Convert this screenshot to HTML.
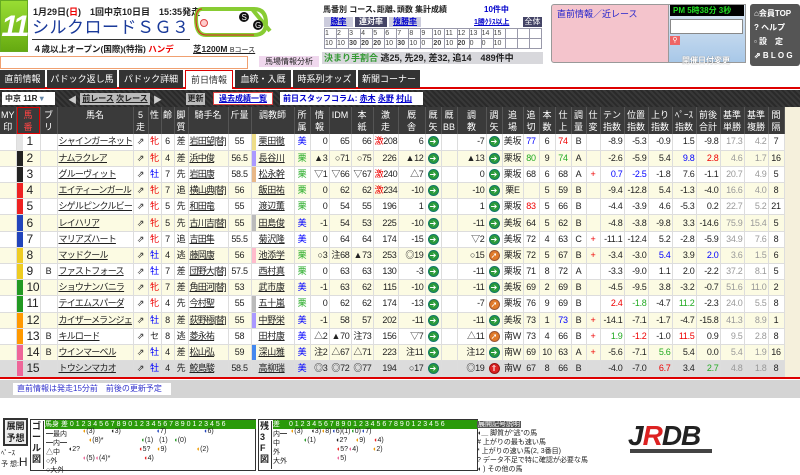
<!DOCTYPE html>
<html><head><meta charset="utf-8">
<style>
*{margin:0;padding:0;box-sizing:border-box}
body{width:800px;height:469px;overflow:hidden;background:#fff;font-family:"Liberation Sans","Noto Sans CJK JP",sans-serif;font-size:9px;color:#222;position:relative}
.a{position:absolute;white-space:nowrap}
.u{text-decoration:underline}
table.m{position:absolute;left:0;top:107px;border-collapse:collapse;table-layout:fixed;width:784px}
table.m th{background:#3a3a3a;color:#fff;font-weight:normal;font-size:9px;line-height:12px;height:27px;border-right:1px solid #555;text-align:center;padding:0;overflow:hidden;white-space:nowrap}
table.m td{height:16.2px;font-size:9px;line-height:15px;border-right:1px solid #ddd;border-bottom:1px solid #ddd;text-align:center;padding:0 1px;white-space:nowrap;overflow:hidden;letter-spacing:-0.3px}
table.m tr:nth-child(odd) td{background:#fcfbe3}
table.m tr.g td{background:#dcdcdc}
td.r{text-align:right!important}
td.n{font-size:12px!important;text-align:left!important;padding-left:10px!important}
td.nm{text-align:left!important;text-decoration:underline;letter-spacing:-0.8px!important}
td.tr{text-align:left!important;text-decoration:underline;padding-left:7px!important}
.f{color:#e00}.b{color:#00f}.gr{color:#2a2}.gy{color:#999}
.ar{display:inline-block;width:11px;height:11px;border-radius:50%;background:#2a9a3a;color:#fff;font-size:8px;line-height:10px;vertical-align:middle;border:1px solid #176;letter-spacing:0}
.ao{background:#e07a2a;border-color:#953}
.ax{background:#d22;border-color:#911}
.beige{position:absolute;left:784px;top:107px;width:16px;height:270px;background:#f5f0dc}
.tab{position:absolute;top:0;height:18px;background:#333;text-align:center}
</style></head><body>

<!-- header -->
<div class="a" style="left:0;top:0;width:28px;height:52px;background:linear-gradient(#9d3,#6a1);color:#fff;font-size:30px;font-style:italic;font-weight:bold;text-align:center;line-height:52px;border:1px solid #6a2;letter-spacing:-3px">11</div>
<div class="a" style="left:33px;top:5px;font-size:9px;font-weight:bold">1月29日(<span class="f">日</span>)　1回中京10日目　15:35発走</div>
<div class="a" style="left:32px;top:17px;font-size:17px;color:#1a3a9a;line-height:22px;border-bottom:1px solid #333;width:158px;letter-spacing:0.5px">シルクロードＳＧ３</div>
<div class="a" style="left:33px;top:43px;font-size:8.5px;font-weight:bold">４歳以上オープン(国際)(特指) <span class="f">ハンデ</span></div>
<svg class="a" style="left:192px;top:3px" width="80" height="36"><path d="M10 6 Q4 6 4 16 Q4 32 14 32 L62 32 Q74 32 74 20 Q74 6 62 6 Z" fill="none" stroke="#8c3" stroke-width="4"/><path d="M60 6 L78 28" stroke="#8c3" stroke-width="4"/><path d="M10 6 Q4 6 4 16 Q4 32 14 32 L62 32" fill="none" stroke="#d22" stroke-width="1"/><circle cx="12" cy="20" r="3.5" fill="#fcc" stroke="#d44"/><circle cx="52" cy="14" r="5" fill="#111"/><text x="49.5" y="17" fill="#fff" font-size="8">S</text><circle cx="66" cy="22" r="5" fill="#111"/><text x="63" y="25" fill="#fff" font-size="8">G</text></svg>
<div class="a u" style="left:193px;top:43px;font-size:8.5px;font-weight:bold">芝1200M <span style="font-size:7px;font-weight:normal">Bコース</span></div>
<div class="a" style="left:0;top:56px;width:248px;height:13px;border:1px solid #f0a070;background:#fff"></div>
<div class="a" style="left:259px;top:56px;width:60px;height:11px;background:#f0d8ee;font-size:8px;text-align:center;line-height:11px">馬場情報分析</div>

<div class="a" style="left:323px;top:4px;font-size:8px;font-weight:bold">馬番別 コース､距離､頭数 集計成績</div>
<div class="a" style="left:484px;top:4px;font-size:8px;font-weight:bold;color:#00c">10件中</div>
<div class="a u" style="left:324px;top:17px;width:29px;height:10px;background:#ccd;color:#00c;font-size:8px;text-align:center;line-height:10px;font-weight:bold">勝率</div>
<div class="a" style="left:355px;top:17px;width:32px;height:10px;background:#446;color:#fff;font-size:8px;text-align:center;line-height:10px;font-weight:bold">連対率</div>
<div class="a u" style="left:389px;top:17px;width:32px;height:10px;background:#ccd;color:#00c;font-size:8px;text-align:center;line-height:10px;font-weight:bold">複勝率</div>
<div class="a u" style="left:474px;top:17px;color:#00c;font-size:7px;font-weight:bold">1勝ｸﾗｽ以上</div>
<div class="a" style="left:523px;top:17px;width:19px;height:10px;background:#446;color:#fff;font-size:8px;text-align:center;line-height:10px">全体</div>
<table class="a" style="left:324px;top:28px;border-collapse:collapse;font-size:7px;color:#444;table-layout:fixed;width:218px">
<tr><td style="border:1px solid #99a;height:10px">1</td><td style="border:1px solid #99a">2</td><td style="border:1px solid #99a">3</td><td style="border:1px solid #99a">4</td><td style="border:1px solid #99a">5</td><td style="border:1px solid #99a">6</td><td style="border:1px solid #99a">7</td><td style="border:1px solid #99a">8</td><td style="border:1px solid #99a">9</td><td style="border:1px solid #99a">10</td><td style="border:1px solid #99a">11</td><td style="border:1px solid #99a">12</td><td style="border:1px solid #99a">13</td><td style="border:1px solid #99a">14</td><td style="border:1px solid #99a">15</td><td style="border:1px solid #99a"></td><td style="border:1px solid #99a"></td><td style="border:1px solid #99a"></td></tr>
<tr><td style="border:1px solid #99a;height:10px">10</td><td style="border:1px solid #99a">10</td><td style="border:1px solid #99a"><b>30</b></td><td style="border:1px solid #99a"><b>20</b></td><td style="border:1px solid #99a"><b>20</b></td><td style="border:1px solid #99a">10</td><td style="border:1px solid #99a"><b>30</b></td><td style="border:1px solid #99a">10</td><td style="border:1px solid #99a">0</td><td style="border:1px solid #99a"><b>20</b></td><td style="border:1px solid #99a">10</td><td style="border:1px solid #99a"><b>20</b></td><td style="border:1px solid #99a">0</td><td style="border:1px solid #99a">0</td><td style="border:1px solid #99a">10</td><td style="border:1px solid #99a"></td><td style="border:1px solid #99a"></td><td style="border:1px solid #99a"></td></tr></table>
<div class="a" style="left:322px;top:52px;width:221px;height:12px;background:#d8d8dc;font-size:9px;font-weight:bold;line-height:12px;padding-left:2px"><span style="color:#393">決まり手割合</span> 逃25, 先29, 差32, 追14　489件中</div>

<div class="a" style="left:551px;top:4px;width:118px;height:59px;background:#f4c4cc;border:1px solid #999;border-radius:3px 0 0 3px;color:#22c;font-size:9px;padding:2px 5px">直前情報／近レース</div>
<div class="a" style="left:668px;top:4px;width:78px;height:59px;background:linear-gradient(#dde8f4,#a8c8e8);border:1px solid #999"></div>
<div class="a" style="left:670px;top:5px;width:74px;height:11px;background:#000;color:#2d2;font-size:8px;font-weight:bold;line-height:11px;padding-left:3px">PM 5時38分 3秒</div>
<div class="a" style="left:670px;top:19px;width:73px;height:15px;background:#fff;border:1px solid #888"></div>
<div class="a" style="left:670px;top:36px;width:10px;height:9px;background:#e66;color:#fff;font-size:7px;text-align:center">&#9906;</div>
<div class="a" style="left:682px;top:55px;font-size:8px;color:#fff;font-weight:bold;text-shadow:0 0 1px #555">開催日付変更</div>
<div class="a" style="left:750px;top:4px;width:50px;height:62px;background:#555;border-radius:3px;color:#fff;font-size:8px;font-weight:bold;line-height:14px;padding:3px 4px">⌂会員TOP<br>? ヘルプ<br>▫ 設　定<br>⇗ B L O G</div>

<!-- tabs -->
<div class="a" style="left:0;top:69px;width:800px;height:20px;border-bottom:2px solid #d00"></div>
<div class="a" style="left:0;top:70px;width:800px;height:19px;font-size:9px;color:#fff;line-height:18px">
<span class="tab" style="left:0;width:45px">直前情報</span>
<span class="tab" style="left:47px;width:70px">パドック返し馬</span>
<span class="tab" style="left:119px;width:64px">パドック詳細</span>
<span class="tab" style="left:185px;width:48px;height:19px;background:#fff;color:#333;border:1px solid #d00;border-bottom:none">前日情報</span>
<span class="tab" style="left:235px;width:56px">血統・入厩</span>
<span class="tab" style="left:293px;width:63px">時系列オッズ</span>
<span class="tab" style="left:358px;width:62px">新聞コーナー</span></div>

<!-- toolbar -->
<div class="a" style="left:0;top:90px;width:800px;height:17px;background:repeating-linear-gradient(45deg,#2a2a2a 0 2px,#383838 2px 4px)"></div>
<div class="a" style="left:2px;top:92px;width:53px;height:13px;background:#fff;font-size:8px;font-weight:bold;line-height:13px;padding-left:3px">中京 11R <span style="color:#68a">▾</span></div>
<div class="a" style="left:68px;top:93px;color:#ccc;font-size:9px">◀</div>
<div class="a" style="left:80px;top:93px;width:70px;height:12px;background:#bbb;font-size:8px;font-weight:bold;line-height:12px;text-align:center"><span class="u">前レース</span> <span class="u">次レース</span></div>
<div class="a" style="left:153px;top:93px;color:#ccc;font-size:9px">▶</div>
<div class="a" style="left:186px;top:93px;width:19px;height:12px;background:#bbb;font-size:8px;font-weight:bold;line-height:12px;text-align:center">更新</div>
<div class="a u" style="left:213px;top:92px;width:60px;height:13px;background:#fff;border:1px solid #d44;font-size:8px;font-weight:bold;color:#00c;text-align:center;line-height:11px">過去成績一覧</div>
<div class="a" style="left:280px;top:92px;width:143px;height:13px;background:#fff;font-size:8px;font-weight:bold;color:#00c;line-height:13px;padding-left:3px">前日スタッフコラム: <span class="u">赤木</span> <span class="u">永野</span> <span class="u">村山</span></div>

<div class="beige"></div>
<table class="m">
<colgroup><col style="width:16px"><col style="width:24px"><col style="width:17px"><col style="width:76px"><col style="width:15px"><col style="width:13px"><col style="width:13px"><col style="width:14px"><col style="width:40px"><col style="width:23px"><col style="width:43px"><col style="width:16px"><col style="width:19px"><col style="width:22px"><col style="width:22px"><col style="width:25px"><col style="width:27px"><col style="width:16px"><col style="width:16px"><col style="width:29px"><col style="width:16px"><col style="width:21px"><col style="width:16px"><col style="width:16px"><col style="width:16px"><col style="width:15px"><col style="width:14px"><col style="width:24px"><col style="width:24px"><col style="width:24px"><col style="width:24px"><col style="width:24px"><col style="width:24px"><col style="width:24px"><col style="width:16px"></colgroup>
<tr><th>MY<br>印</th><th style="color:#f44;box-shadow:inset 0 0 0 1px #d00">馬<br>番</th><th>ブ<br>リ</th><th>馬名<br>&nbsp;</th><th>5<br>走</th><th>性<br>&nbsp;</th><th>齢<br>&nbsp;</th><th>脚<br>質</th><th>騎手名<br>&nbsp;</th><th>斤量<br>&nbsp;</th><th>調教師<br>&nbsp;</th><th>所<br>属</th><th>情<br>報</th><th>IDM<br>&nbsp;</th><th>本<br>紙</th><th>激<br>走</th><th>厩<br>舎</th><th>厩<br>矢</th><th>厩<br>BB</th><th>調<br>教</th><th>調<br>矢</th><th>追<br>場</th><th>追<br>切</th><th>本<br>数</th><th>仕<br>上</th><th>調<br>量</th><th>仕<br>変</th><th>テン<br>指数</th><th>位置<br>指数</th><th>上り<br>指数</th><th>ﾍﾟｰｽ<br>指数</th><th>前後<br>合計</th><th>基準<br>単勝</th><th>基準<br>複勝</th><th>間<br>隔</th></tr>
<tr><td></td><td class="n" style="box-shadow:inset 6px 0 #e4e4e4">1</td><td></td><td class="nm">シャインガーネット</td><td>⇗</td><td class="f">牝</td><td>6</td><td>差</td><td class="nm">岩田望[替]</td><td>55</td><td class="tr" style="box-shadow:inset 4px 0 #eedd88">栗田徹</td><td class="b">美</td><td class="r">0</td><td class="r">65</td><td class="r">66</td><td class="r"><span class="f">激</span>208</td><td class="r">6</td><td><span class="ar">➔</span></td><td></td><td class="r">-7</td><td><span class="ar">➔</span></td><td>美坂</td><td class="b">77</td><td>6</td><td class="f">74</td><td>B</td><td></td><td class="r">-8.9</td><td class="r">-5.3</td><td class="r">-0.9</td><td class="r">1.5</td><td class="r">-9.8</td><td class="r gy">17.3</td><td class="r gy">4.2</td><td>7</td></tr>
<tr><td></td><td class="n" style="box-shadow:inset 6px 0 #222">2</td><td></td><td class="nm">ナムラクレア</td><td>⇗</td><td class="f">牝</td><td>4</td><td>差</td><td class="nm">浜中俊</td><td>56.5</td><td class="tr" style="box-shadow:inset 4px 0 #a9f">長谷川</td><td class="gr">栗</td><td class="r">▲3</td><td class="r">○71</td><td class="r">○75</td><td class="r">226</td><td class="r">▲12</td><td><span class="ar">➔</span></td><td></td><td class="r">▲13</td><td><span class="ar">➔</span></td><td>栗坂</td><td class="gr">80</td><td>9</td><td class="gr">74</td><td>A</td><td></td><td class="r">-2.6</td><td class="r">-5.9</td><td class="r">5.4</td><td class="r b">9.8</td><td class="r f">2.8</td><td class="r gy">4.6</td><td class="r gy">1.7</td><td>16</td></tr>
<tr><td></td><td class="n" style="box-shadow:inset 6px 0 #222">3</td><td></td><td class="nm">グルーヴィット</td><td>⇗</td><td class="b">牡</td><td>7</td><td>先</td><td class="nm">岩田康</td><td>58.5</td><td class="tr" style="box-shadow:inset 4px 0 #e8b888">松永幹</td><td class="gr">栗</td><td class="r">▽1</td><td class="r">▽66</td><td class="r">▽67</td><td class="r"><span class="f">激</span>240</td><td class="r">△7</td><td><span class="ar">➔</span></td><td></td><td class="r">0</td><td><span class="ar">➔</span></td><td>栗坂</td><td>68</td><td>6</td><td>68</td><td>A</td><td class="f">+</td><td class="r b">0.7</td><td class="r b">-2.5</td><td class="r">-1.8</td><td class="r">7.6</td><td class="r">-1.1</td><td class="r gy">20.7</td><td class="r gy">4.9</td><td>5</td></tr>
<tr><td></td><td class="n" style="box-shadow:inset 6px 0 #e22">4</td><td></td><td class="nm">エイティーンガール</td><td>⇗</td><td class="f">牝</td><td>7</td><td>追</td><td class="nm">横山典[替]</td><td>56</td><td class="tr">飯田祐</td><td class="gr">栗</td><td class="r">0</td><td class="r">62</td><td class="r">62</td><td class="r"><span class="f">激</span>234</td><td class="r">-10</td><td><span class="ar">➔</span></td><td></td><td class="r">-10</td><td><span class="ar">➔</span></td><td>栗E</td><td></td><td>5</td><td>59</td><td>B</td><td></td><td class="r">-9.4</td><td class="r">-12.8</td><td class="r">5.4</td><td class="r">-1.3</td><td class="r">-4.0</td><td class="r gy">16.6</td><td class="r gy">4.0</td><td>8</td></tr>
<tr><td></td><td class="n" style="box-shadow:inset 6px 0 #e22">5</td><td></td><td class="nm">シゲルピンクルビー</td><td>⇗</td><td class="f">牝</td><td>5</td><td>先</td><td class="nm">和田竜</td><td>55</td><td class="tr">渡辺薫</td><td class="gr">栗</td><td class="r">0</td><td class="r">54</td><td class="r">55</td><td class="r">196</td><td class="r">1</td><td><span class="ar">➔</span></td><td></td><td class="r">1</td><td><span class="ar">➔</span></td><td>栗坂</td><td class="f">83</td><td>5</td><td>66</td><td>B</td><td></td><td class="r">-4.4</td><td class="r">-3.9</td><td class="r">4.6</td><td class="r">-5.3</td><td class="r">0.2</td><td class="r gy">22.7</td><td class="r gy">5.2</td><td>21</td></tr>
<tr><td></td><td class="n" style="box-shadow:inset 6px 0 #2244bb">6</td><td></td><td class="nm">レイハリア</td><td>⇗</td><td class="f">牝</td><td>5</td><td>先</td><td class="nm">古川吉[替]</td><td>55</td><td class="tr" style="box-shadow:inset 4px 0 #bbb">田島俊</td><td class="b">美</td><td class="r">-1</td><td class="r">54</td><td class="r">53</td><td class="r">225</td><td class="r">-10</td><td><span class="ar">➔</span></td><td></td><td class="r">-11</td><td><span class="ar">➔</span></td><td>美坂</td><td>64</td><td>5</td><td>62</td><td>B</td><td></td><td class="r">-4.8</td><td class="r">-3.8</td><td class="r">-9.8</td><td class="r">3.3</td><td class="r">-14.6</td><td class="r gy">75.9</td><td class="r gy">15.4</td><td>5</td></tr>
<tr><td></td><td class="n" style="box-shadow:inset 6px 0 #2244bb">7</td><td></td><td class="nm">マリアズハート</td><td>⇗</td><td class="f">牝</td><td>7</td><td>追</td><td class="nm">吉田隼</td><td>55.5</td><td class="tr">菊沢隆</td><td class="b">美</td><td class="r">0</td><td class="r">64</td><td class="r">64</td><td class="r">174</td><td class="r">-15</td><td><span class="ar">➔</span></td><td></td><td class="r">▽2</td><td><span class="ar">➔</span></td><td>美坂</td><td>72</td><td>4</td><td>63</td><td>C</td><td class="f">+</td><td class="r">-11.1</td><td class="r">-12.4</td><td class="r">5.2</td><td class="r">-2.8</td><td class="r">-5.9</td><td class="r gy">34.9</td><td class="r gy">7.6</td><td>8</td></tr>
<tr><td></td><td class="n" style="box-shadow:inset 6px 0 #ec2">8</td><td></td><td class="nm">マッドクール</td><td>⇗</td><td class="b">牡</td><td>4</td><td>逃</td><td class="nm">藤岡康</td><td>56</td><td class="tr" style="box-shadow:inset 4px 0 #fbc">池添学</td><td class="gr">栗</td><td class="r">○3</td><td class="r">注68</td><td class="r">▲73</td><td class="r">253</td><td class="r">◎19</td><td><span class="ar">➔</span></td><td></td><td class="r">○15</td><td><span class="ar ao">➚</span></td><td>栗坂</td><td>72</td><td>5</td><td>67</td><td>B</td><td class="f">+</td><td class="r">-3.4</td><td class="r">-3.0</td><td class="r b">5.4</td><td class="r">3.9</td><td class="r b">2.0</td><td class="r gy">3.6</td><td class="r gy">1.5</td><td>6</td></tr>
<tr><td></td><td class="n" style="box-shadow:inset 6px 0 #ec2">9</td><td>B</td><td class="nm">ファストフォース</td><td>⇗</td><td class="b">牡</td><td>7</td><td>差</td><td class="nm">団野大[替]</td><td>57.5</td><td class="tr">西村真</td><td class="gr">栗</td><td class="r">0</td><td class="r">63</td><td class="r">63</td><td class="r">130</td><td class="r">-3</td><td><span class="ar">➔</span></td><td></td><td class="r">-11</td><td><span class="ar">➔</span></td><td>栗坂</td><td>71</td><td>8</td><td>72</td><td>A</td><td></td><td class="r">-3.3</td><td class="r">-9.0</td><td class="r">1.1</td><td class="r">2.0</td><td class="r">-2.2</td><td class="r gy">37.2</td><td class="r gy">8.1</td><td>5</td></tr>
<tr><td></td><td class="n" style="box-shadow:inset 6px 0 #292">10</td><td></td><td class="nm">ショウナンバニラ</td><td>⇗</td><td class="f">牝</td><td>7</td><td>差</td><td class="nm">角田河[替]</td><td>53</td><td class="tr">武市康</td><td class="b">美</td><td class="r">-1</td><td class="r">63</td><td class="r">62</td><td class="r">115</td><td class="r">-10</td><td><span class="ar">➔</span></td><td></td><td class="r">-11</td><td><span class="ar">➔</span></td><td>美坂</td><td>69</td><td>2</td><td>69</td><td>B</td><td></td><td class="r">-4.5</td><td class="r">-9.5</td><td class="r">3.8</td><td class="r">-3.2</td><td class="r">-0.7</td><td class="r gy">51.6</td><td class="r gy">11.0</td><td>2</td></tr>
<tr><td></td><td class="n" style="box-shadow:inset 6px 0 #292">11</td><td></td><td class="nm">テイエムスパーダ</td><td>⇗</td><td class="f">牝</td><td>4</td><td>先</td><td class="nm">今村聖</td><td>55</td><td class="tr" style="box-shadow:inset 4px 0 #bbb">五十嵐</td><td class="gr">栗</td><td class="r">0</td><td class="r">62</td><td class="r">62</td><td class="r">174</td><td class="r">-13</td><td><span class="ar">➔</span></td><td></td><td class="r">-7</td><td><span class="ar ao">➚</span></td><td>栗坂</td><td>76</td><td>9</td><td>69</td><td>B</td><td></td><td class="r f">2.4</td><td class="r gr">-1.8</td><td class="r">-4.7</td><td class="r gr">11.2</td><td class="r">-2.3</td><td class="r gy">24.0</td><td class="r gy">5.5</td><td>8</td></tr>
<tr><td></td><td class="n" style="box-shadow:inset 6px 0 #f90">12</td><td></td><td class="nm">カイザーメランジェ</td><td>⇗</td><td class="b">牡</td><td>8</td><td>差</td><td class="nm">荻野極[替]</td><td>55</td><td class="tr" style="box-shadow:inset 4px 0 #a9f">中野栄</td><td class="b">美</td><td class="r">-1</td><td class="r">58</td><td class="r">57</td><td class="r">202</td><td class="r">-11</td><td><span class="ar">➔</span></td><td></td><td class="r">-11</td><td><span class="ar">➔</span></td><td>美坂</td><td>73</td><td>1</td><td class="b">73</td><td>B</td><td class="f">+</td><td class="r">-14.1</td><td class="r">-7.1</td><td class="r">-1.7</td><td class="r">-4.7</td><td class="r">-15.8</td><td class="r gy">41.3</td><td class="r gy">8.9</td><td>1</td></tr>
<tr><td></td><td class="n" style="box-shadow:inset 6px 0 #f90">13</td><td>B</td><td class="nm">キルロード</td><td>⇗</td><td>セ</td><td>8</td><td>逃</td><td class="nm">菱永祐</td><td>58</td><td class="tr">田村康</td><td class="b">美</td><td class="r">△2</td><td class="r">▲70</td><td class="r">注73</td><td class="r">156</td><td class="r">▽7</td><td><span class="ar">➔</span></td><td></td><td class="r">△11</td><td><span class="ar ao">➚</span></td><td>南W</td><td>73</td><td>4</td><td>66</td><td>B</td><td class="f">+</td><td class="r gr">1.9</td><td class="r f">-1.2</td><td class="r">-1.0</td><td class="r f">11.5</td><td class="r">0.9</td><td class="r gy">9.5</td><td class="r gy">2.8</td><td>8</td></tr>
<tr><td></td><td class="n" style="box-shadow:inset 6px 0 #e69">14</td><td>B</td><td class="nm">ウインマーベル</td><td>⇗</td><td class="b">牡</td><td>4</td><td>差</td><td class="nm">松山弘</td><td>59</td><td class="tr" style="box-shadow:inset 4px 0 #48e">深山雅</td><td class="b">美</td><td class="r">注2</td><td class="r">△67</td><td class="r">△71</td><td class="r">223</td><td class="r">注11</td><td><span class="ar">➔</span></td><td></td><td class="r">注12</td><td><span class="ar">➔</span></td><td>南W</td><td>69</td><td>10</td><td>63</td><td>A</td><td class="f">+</td><td class="r">-5.6</td><td class="r">-7.1</td><td class="r gr">5.6</td><td class="r">5.4</td><td class="r">0.0</td><td class="r gy">5.4</td><td class="r gy">1.9</td><td>16</td></tr>
<tr class="g"><td></td><td class="n" style="box-shadow:inset 6px 0 #e69">15</td><td></td><td class="nm">トウシンマカオ</td><td>⇗</td><td class="b">牡</td><td>4</td><td>先</td><td class="nm">鮫島駿</td><td>58.5</td><td class="tr">高柳瑞</td><td class="b">美</td><td class="r">◎3</td><td class="r">◎72</td><td class="r">◎77</td><td class="r">194</td><td class="r">○17</td><td><span class="ar">➔</span></td><td></td><td class="r">◎19</td><td><span class="ar ax">⇑</span></td><td>南W</td><td>67</td><td>8</td><td>66</td><td>B</td><td></td><td class="r">-4.0</td><td class="r">-7.0</td><td class="r f">6.7</td><td class="r">3.4</td><td class="r gr">2.7</td><td class="r gy">4.8</td><td class="r gy">1.8</td><td>8</td></tr>
</table>

<!-- bottom -->
<div class="a" style="left:0;top:377px;width:800px;height:2px;background:#d00"></div>
<div class="a" style="left:0;top:380px;width:800px;height:18px;background:#d4d4d4"></div>
<div class="a" style="left:13px;top:383px;width:158px;height:12px;background:#fff;color:#33c;font-size:8px;line-height:12px;padding-left:4px">直前情報は発走15分前　前後の更新予定</div>

<div class="a" style="left:3px;top:418px;width:25px;height:28px;border:2px solid #333;font-size:9px;font-weight:bold;text-align:center;line-height:12px;background:#eee">展開<br>予想</div>
<div class="a" style="left:1px;top:449px;font-size:7px;line-height:9px">ﾍﾟｰｽ<br>予 想:<span style="font-size:12px">H</span></div>
<div class="a" style="left:30px;top:419px;width:226px;height:52px;border:1px solid #333"></div>
<div class="a" style="left:32px;top:421px;width:12px;height:48px;font-size:9px;font-weight:bold;line-height:11px;border-right:1px solid #333">ゴ<br>ー<br>ル<br>図</div>
<div class="a" style="left:45px;top:420px;width:211px;height:9px;background:#2a9a0a;color:#fff;font-size:7px;line-height:9px;overflow:hidden">馬身 差 0 1 2 3 4 5 6 7 8 9 0 1 2 3 4 5 6 7 8 9 0 1 2 3 4 5 6</div>
<div class="a" style="left:46px;top:430px;font-size:7px;line-height:9px">━最内<br>━内━<br>△中<br>○外<br>○大外</div>
<div class="a" style="left:82px;top:428px;font-size:7px;white-space:pre"><span style="color:#e90">◖</span>(3)        ◖3)                  <span style="color:#24b">◖</span>7)                   <span style="color:#24b">◖</span>6)</div>
<div class="a" style="left:88px;top:437px;font-size:7px;white-space:pre"><span style="color:#e90">◖</span>(8)*                   <span style="color:#292">◖</span>(1)   (1)   <span style="color:#292">◖</span>(0)</div>
<div class="a" style="left:68px;top:446px;font-size:7px;white-space:pre">◖2?                              <span style="color:#e22">◖</span>5?   <span style="color:#e90">◖</span>9)               <span style="color:#e90">◖</span>(2)</div>
<div class="a" style="left:82px;top:455px;font-size:7px;white-space:pre"><span style="color:#e69">◖</span>(5)<span style="color:#e69">◖</span>(4)*                 <span style="color:#e22">◖</span>4)</div>

<div class="a" style="left:258px;top:419px;width:220px;height:52px;border:1px solid #333"></div>
<div class="a" style="left:260px;top:421px;width:12px;height:48px;font-size:9px;font-weight:bold;line-height:11px;border-right:1px solid #333">残<br>3<br>F<br>図</div>
<div class="a" style="left:273px;top:420px;width:205px;height:9px;background:#2a9a0a;color:#fff;font-size:7px;line-height:9px;overflow:hidden">差 　0 1 2 3 4 5 6 7 8 9 0 1 2 3 4 5 6 7 8 9 0 1 2 3 4 5 6</div>
<div class="a" style="left:273px;top:430px;font-size:7px;line-height:9px">内━<br>中<br>外<br>大外</div>
<div class="a" style="left:290px;top:428px;font-size:7px;white-space:pre"><span style="color:#e90">◖</span>(3)    ◖3)<span style="color:#e90">◖</span>8)<span style="color:#24b">◖</span>6)(1)<span style="color:#292">◖</span>0)<span style="color:#24b">◖</span>7)</div>
<div class="a" style="left:303px;top:437px;font-size:7px;white-space:pre"><span style="color:#292">◖</span>(1)          ◖2?    <span style="color:#e90">◖</span>9)    <span style="color:#e22">◖</span>4)</div>
<div class="a" style="left:336px;top:446px;font-size:7px;white-space:pre"><span style="color:#e22">◖</span>5?<span style="color:#e69">◖</span>4)       <span style="color:#e90">◖</span>2)</div>
<div class="a" style="left:336px;top:455px;font-size:7px;white-space:pre"><span style="color:#e69">◖</span>5)</div>

<div class="a" style="left:477px;top:420px;font-size:7px;line-height:9px"><span style="background:#555;color:#fff;padding:0 1px">展開記号説明</span><br>◖＿ 脚質が"逃"の馬<br># 上がりの最も速い馬<br>* 上がりの速い馬(2, 3番目)<br>? データ不足で特に確認が必要な馬<br>◖ ) その他の馬</div>
<div class="a" style="left:628px;top:424px;font-size:28px;font-weight:bold;font-style:italic;color:#222;letter-spacing:-1px;line-height:24px">J<span style="color:#d22">R</span>DB</div>
<div class="a" style="left:630px;top:449px;width:82px;height:4px;background:#444"></div>
</body></html>
